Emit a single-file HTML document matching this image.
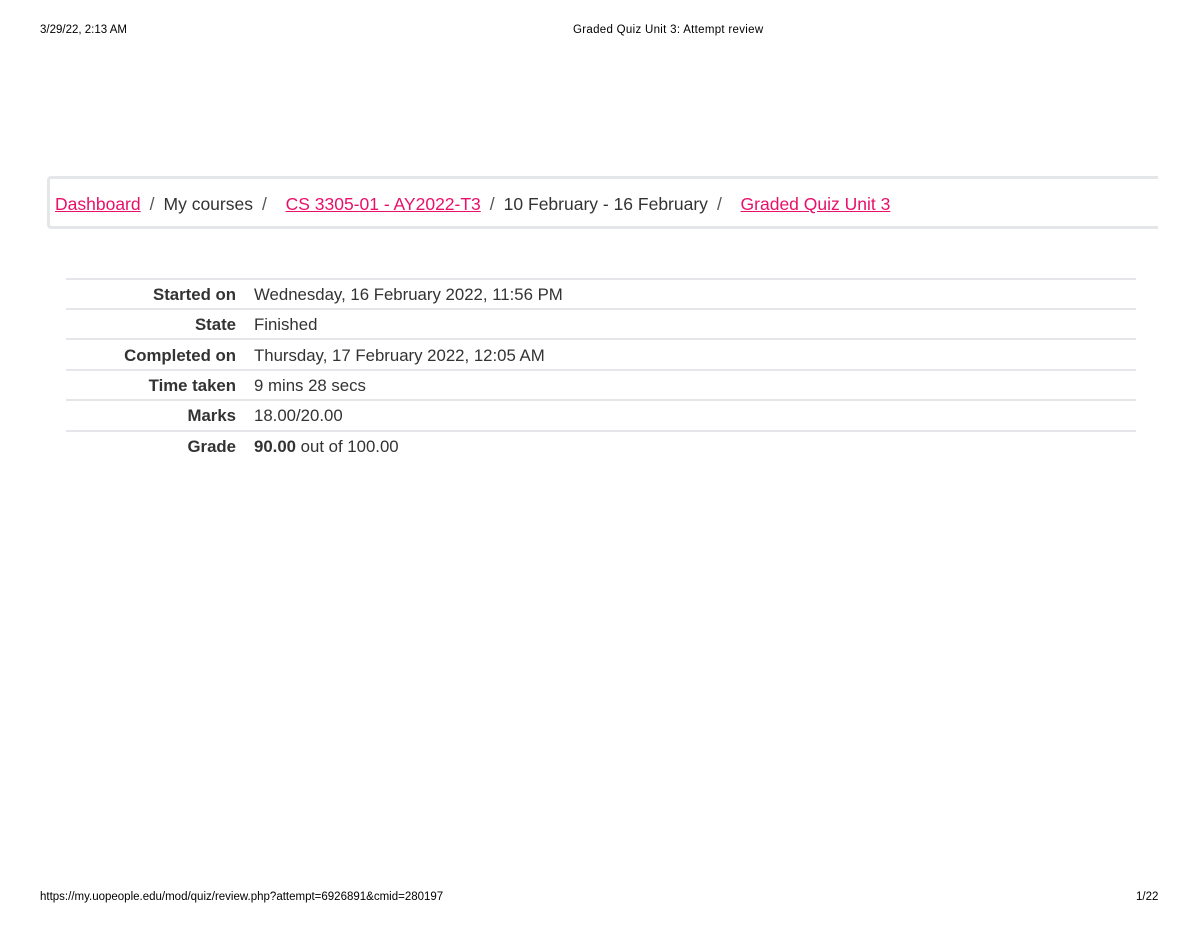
<!DOCTYPE html>
<html><head><meta charset="utf-8"><style>
html,body{margin:0;padding:0;background:#fff;}
body{width:1200px;height:927px;position:relative;overflow:hidden;font-family:"Liberation Sans","DejaVu Sans",sans-serif;color:#222;}
.hdr{position:absolute;font-size:11.5px;color:#000;}
.bc{position:absolute;left:47px;top:176px;width:1111px;height:53px;border:3px solid #e4e6e9;border-right:none;border-radius:4px 0 0 4px;box-sizing:border-box;font-size:17.5px;color:#333;}
.bc span.t{position:absolute;top:15px;left:5px;white-space:nowrap;}
.bc a{color:#e8106a;text-decoration:underline;}
.sep{color:#555;margin:0 9px;}
.line{position:absolute;left:66px;width:1070px;height:2px;background:#e4e6e9;}
.l,.v{position:absolute;font-size:16.8px;color:#333;white-space:nowrap;line-height:20px;}
.l{right:964px;font-weight:bold;text-align:right;}
.v{left:254px;}
</style></head><body>
<div class="hdr" style="left:40px;top:24px;">3/29/22, 2:13 AM</div>
<div class="hdr" style="left:573px;top:24px;letter-spacing:0.3px;">Graded Quiz Unit 3: Attempt review</div>
<div class="bc"><span class="t"><a>Dashboard</a><span class="sep">/</span>My courses<span class="sep">/</span>&nbsp;&nbsp;<a>CS 3305-01 - AY2022-T3</a><span class="sep">/</span>10 February - 16 February<span class="sep">/</span>&nbsp;&nbsp;<a>Graded Quiz Unit 3</a></span></div>

<div class="line" style="top:278px"></div>
<div class="line" style="top:308px"></div>
<div class="line" style="top:338px"></div>
<div class="line" style="top:369px"></div>
<div class="line" style="top:399px"></div>
<div class="line" style="top:430px"></div>

<div class="l" style="top:285px">Started on</div><div class="v" style="top:285px">Wednesday, 16 February 2022, 11:56 PM</div>
<div class="l" style="top:315px">State</div><div class="v" style="top:315px">Finished</div>
<div class="l" style="top:346px">Completed on</div><div class="v" style="top:346px">Thursday, 17 February 2022, 12:05 AM</div>
<div class="l" style="top:376px">Time taken</div><div class="v" style="top:376px">9 mins 28 secs</div>
<div class="l" style="top:406px">Marks</div><div class="v" style="top:406px">18.00/20.00</div>
<div class="l" style="top:437px">Grade</div><div class="v" style="top:437px"><b>90.00</b> out of 100.00</div>

<div class="hdr" style="left:40px;top:891px;">https://my.uopeople.edu/mod/quiz/review.php?attempt=6926891&amp;cmid=280197</div>
<div class="hdr" style="left:1136px;top:891px;">1/22</div>
</body></html>
